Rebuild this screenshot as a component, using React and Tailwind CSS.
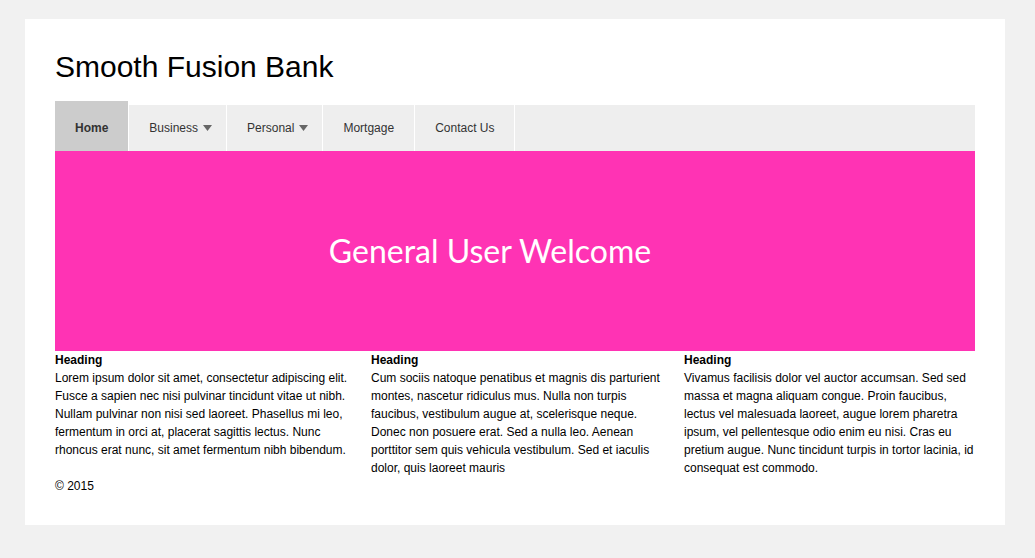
import React from 'react';

const NAV = [
  { label: 'Home', active: true },
  { label: 'Business', menu: true },
  { label: 'Personal', menu: true },
  { label: 'Mortgage' },
  { label: 'Contact Us' },
];

const COLUMNS = [
  'Lorem ipsum dolor sit amet, consectetur adipiscing elit. Fusce a sapien nec nisi pulvinar tincidunt vitae ut nibh. Nullam pulvinar non nisi sed laoreet. Phasellus mi leo, fermentum in orci at, placerat sagittis lectus. Nunc rhoncus erat nunc, sit amet fermentum nibh bibendum.',
  'Cum sociis natoque penatibus et magnis dis parturient montes, nascetur ridiculus mus. Nulla non turpis faucibus, vestibulum augue at, scelerisque neque. Donec non posuere erat. Sed a nulla leo. Aenean porttitor sem quis vehicula vestibulum. Sed et iaculis dolor, quis laoreet mauris',
  'Vivamus facilisis dolor vel auctor accumsan. Sed sed massa et magna aliquam congue. Proin faucibus, lectus vel malesuada laoreet, augue lorem pharetra ipsum, vel pellentesque odio enim eu nisi. Cras eu pretium augue. Nunc tincidunt turpis in tortor lacinia, id consequat est commodo.',
];

// small down arrow next to dropdown items
const Caret = () => (
  <svg width="9" height="6" viewBox="0 0 9 6" className="ml-[5px] fill-[#666]">
    <path d="M0 0h9L4.5 6z" />
  </svg>
);

export default function App() {
  return (
    <div className="min-h-[558px] bg-[#f1f1f1] pt-[19px] pb-[34px] font-['Liberation_Sans',Arial,sans-serif] text-[12px] text-black">
      <div className="ml-[25px] w-[980px] bg-white p-[30px]">
        <h1 className="text-[30px] leading-[36px]">Smooth Fusion Bank</h1>

        <nav className="mt-[20px] flex h-[46px] bg-[#eeeeee] text-[#333]">
          {NAV.map((item) => (
            <a
              key={item.label}
              className={`flex items-center border-r border-white ${
                item.active ? '-mt-[4px] bg-[#cccccc] px-5 pt-[4px] font-bold' : ''
              } ${item.menu ? 'pl-[20px] pr-[14px]' : !item.active ? 'px-5' : ''}`}
            >
              {item.label}
              {item.menu && <Caret />}
            </a>
          ))}
        </nav>

        <div className="flex h-[200px] items-center justify-center bg-[#ff33b4] pr-[50px]">
          <h2 className="font-['Lato','Open_Sans',sans-serif] text-[32px] text-white">General User Welcome</h2>
        </div>

        <div className="grid grid-cols-[316px_313px_291px] leading-[18px]">
          {COLUMNS.map((text, i) => (
            <div key={i} className={i < 2 ? 'pr-[10px]' : ''}>
              <h3 className="font-bold">Heading</h3>
              <p>{text}</p>
            </div>
          ))}
        </div>

        <footer className="leading-[18px]">© 2015</footer>
      </div>
    </div>
  );
}
